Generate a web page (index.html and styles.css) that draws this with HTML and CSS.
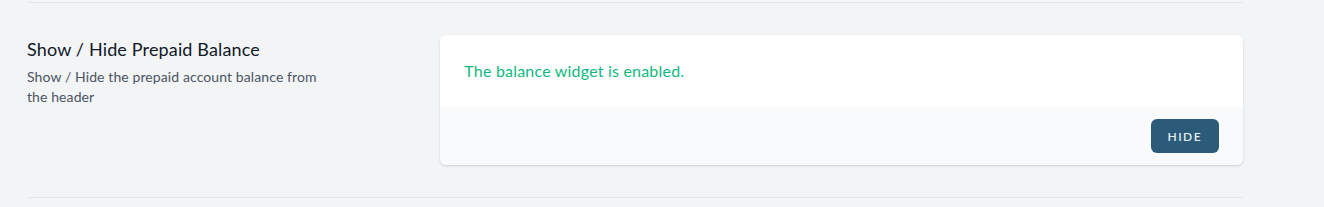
FILE: index.html
```html
<!DOCTYPE html>
<html lang="en">
<head>
    <meta charset="UTF-8">
    <meta name="viewport" content="width=device-width, initial-scale=1.0">
    <title>Prepaid Balance</title>
    <link rel="stylesheet" href="styles.css">
</head>
<body>
    <div class="page">
        <div class="section-border"></div>

        <div class="action-section">
            <div class="section-title">
                <h3>Show / Hide Prepaid Balance</h3>
                <p>Show / Hide the prepaid account balance from the header</p>
            </div>

            <div class="section-body">
                <div class="card-content">
                    <p class="status-text">The balance widget is enabled.</p>
                </div>
                <div class="card-actions">
                    <button class="btn-hide">Hide</button>
                </div>
            </div>
        </div>

        <div class="section-border"></div>
    </div>
</body>
</html>
```

FILE: styles.css
```css
body {
    font-family: Lato, "Open Sans", sans-serif;
    margin: 0;
    background-color: #f3f4f6;
}
.page {
    width: 1216px;
    margin-left: 27px;
    padding-top: 2px;
}
.section-border {
    border-top: 1px solid #e5e7eb;
}
.action-section {
    display: grid;
    grid-template-columns: repeat(3, 1fr);
    gap: 24px;
    padding: 32px 0;
}
.section-title {
    grid-column: span 1;
}
.section-title h3 {
    margin: 0;
    font-size: 18px;
    line-height: 28px;
    font-weight: 400;
    letter-spacing: 0.15px;
    color: #111827;
}
.section-title p {
    margin: 4px 0 0;
    max-width: 300px;
    font-size: 14px;
    line-height: 20px;
    letter-spacing: 0.1px;
    color: #4b5563;
}
.section-body {
    grid-column: span 2;
    border-radius: 6px;
    box-shadow: 0 1px 3px rgba(0, 0, 0, 0.1), 0 1px 2px rgba(0, 0, 0, 0.06);
}
.card-content {
    padding: 24px;
    background-color: white;
    border-radius: 6px 6px 0 0;
}
.status-text {
    margin: 0;
    font-size: 16px;
    line-height: 24px;
    letter-spacing: 0.2px;
    color: #10b981;
}
.card-actions {
    display: flex;
    justify-content: flex-end;
    align-items: center;
    padding: 12px 24px;
    background-color: #f9fafb;
    border-radius: 0 0 6px 6px;
}
.btn-hide {
    height: 34px;
    padding: 0 17px;
    border: none;
    border-radius: 6px;
    background-color: #2b5b79;
    color: #e5edf2;
    font-family: inherit;
    font-size: 12px;
    font-weight: 600;
    letter-spacing: 0.12em;
    text-transform: uppercase;
    cursor: pointer;
}
```
